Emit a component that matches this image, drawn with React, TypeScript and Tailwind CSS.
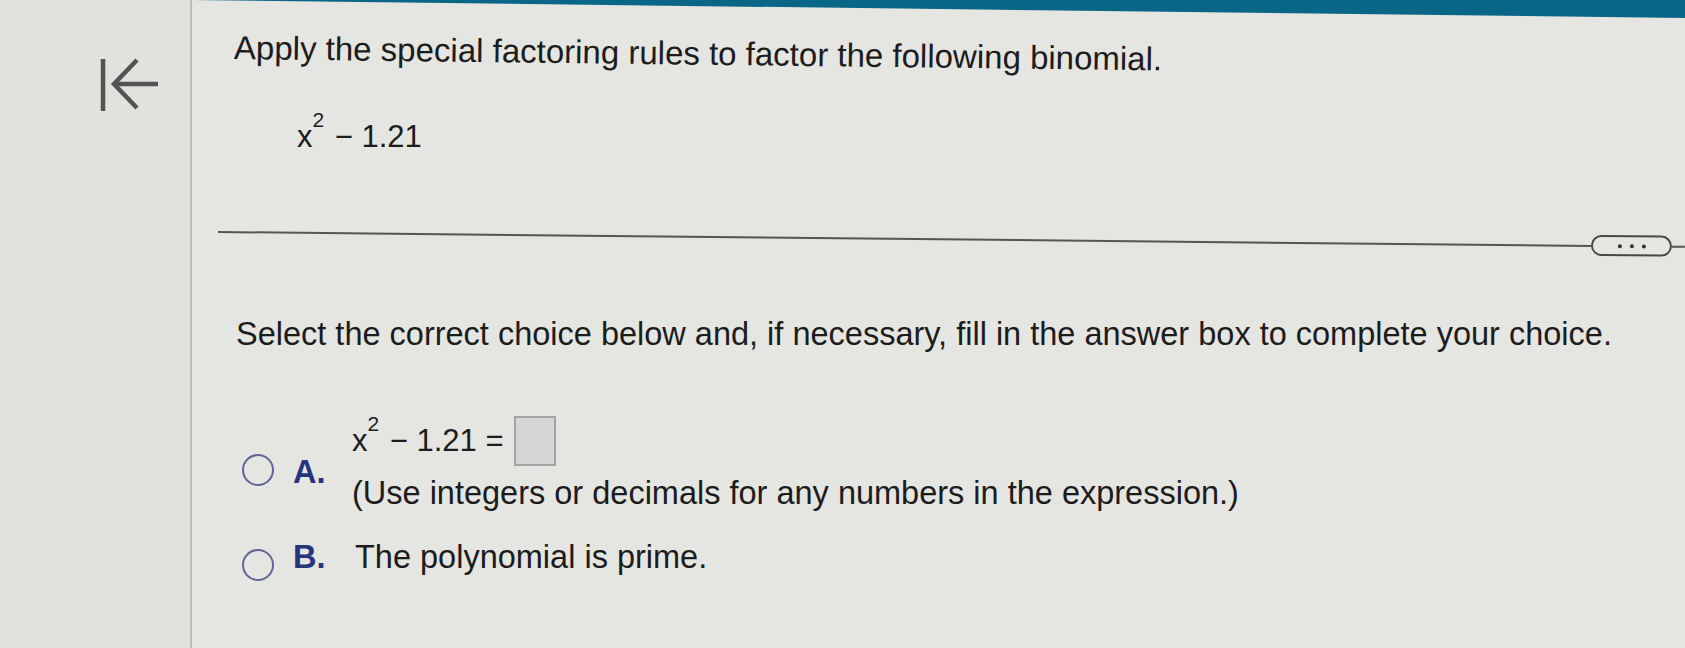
import React from 'react';

function BackArrow() {
  return (
    <svg width="62" height="56" viewBox="0 0 62 56" fill="none" stroke="#535353" strokeWidth="4.5">
      <line x1="5" y1="2" x2="5" y2="54" />
      <line x1="16" y1="27" x2="60" y2="27" />
      <polyline points="39,3 16,27 39,51" strokeLinejoin="miter" />
    </svg>
  );
}

function Radio() {
  return <div className="w-[32px] h-[32px] rounded-full border-[2.5px] border-[#5d6694] flex-shrink-0" />;
}

function Sq() {
  return <span className="text-[21px] leading-[0] mr-[2px] [vertical-align:20px]">2</span>;
}

export default function App() {
  return (
    <div
      className="w-[1685px] h-[648px] flex overflow-hidden bg-[#e5e5e2] text-[#1c1c1c]"
      style={{ fontFamily: '"Liberation Sans", Arial, sans-serif' }}
    >
      {/* ── Left rail ─────────────────────────────── */}
      <div className="w-[192px] flex-shrink-0 bg-[#e1e1de] border-r-2 border-[#bcbcb9] pl-[98px] pt-[57px]">
        <BackArrow />
      </div>

      {/* ── Question panel ────────────────────────── */}
      <div className="flex-1 flex flex-col">
        <div className="h-[18px] bg-[#0a6687] [clip-path:polygon(0_0,100%_0,100%_100%,0_0)]" />

        <div className="pl-[42px]">
          <h1 className="mt-[10px] text-[33px] leading-[40px] font-normal origin-left rotate-[0.7deg]">
            Apply the special factoring rules to factor the following binomial.
          </h1>

          <div className="mt-[51px] ml-[63px] text-[31px] leading-[36px] whitespace-nowrap">
            x<Sq /> − 1.21
          </div>
        </div>

        {/* divider with more button */}
        <div className="mt-[66px] ml-[26px] flex items-center origin-left rotate-[0.58deg]">
          <div className="flex-1 h-[2px] bg-[#555]" />
          <div className="w-[81px] h-[21px] rounded-full border-2 border-[#474747] flex items-center justify-center gap-[8px]">
            <span className="w-[4px] h-[4px] rounded-full bg-[#333]" />
            <span className="w-[4px] h-[4px] rounded-full bg-[#333]" />
            <span className="w-[4px] h-[4px] rounded-full bg-[#333]" />
          </div>
          <div className="w-[13px] h-[2px] bg-[#555]" />
        </div>

        <div className="pl-[44px]">
          <p className="mt-[72px] text-[32.5px] leading-[40px] whitespace-nowrap">
            Select the correct choice below and, if necessary, fill in the answer box to complete your choice.
          </p>

          {/* Option A */}
          <div className="mt-[62px] ml-[6px] flex items-start">
            <div className="mt-[38px]"><Radio /></div>
            <div className="mt-[36px] ml-[19px] w-[59px] text-[32.5px] leading-[40px] font-bold text-[#27357c]">A.</div>
            <div className="flex flex-col">
              <div className="flex items-start h-[50px]">
                <span className="mt-[7px] text-[31px] leading-[36px] whitespace-nowrap">
                  x<Sq /> − 1.21 =
                </span>
                <div className="ml-[10px] w-[42px] h-[50px] bg-[#d6d6d4] border-2 border-[#a4a4a6]" />
              </div>
              <p className="mt-[7px] text-[32.5px] leading-[40px] whitespace-nowrap">
                (Use integers or decimals for any numbers in the expression.)
              </p>
            </div>
          </div>

          {/* Option B */}
          <div className="mt-[24px] ml-[6px] flex items-start">
            <div className="mt-[12px]"><Radio /></div>
            <div className="ml-[19px] w-[62px] text-[32.5px] leading-[40px] font-bold text-[#27357c]">B.</div>
            <p className="text-[32.5px] leading-[40px] whitespace-nowrap">The polynomial is prime.</p>
          </div>
        </div>
      </div>
    </div>
  );
}
